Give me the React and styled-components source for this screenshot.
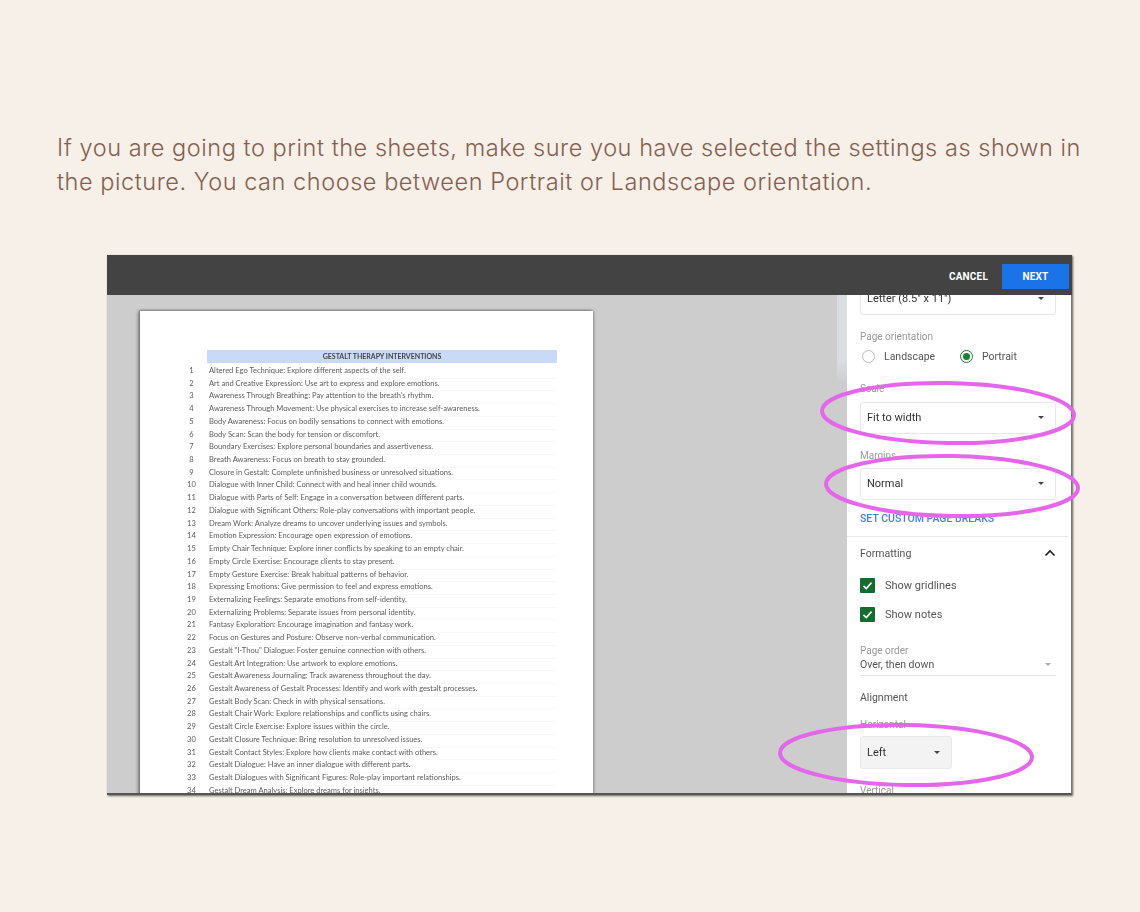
import React from 'react'
import styled, { createGlobalStyle } from 'styled-components'

const Global = createGlobalStyle`
html, body { margin: 0; padding: 0; background: #f6f0e9; }
* { box-sizing: border-box; }
`

const Screen = styled.div`
width: 1140px;
height: 912px;
padding: 131px 40px 0 57px;
overflow: hidden;
`
const Intro = styled.p`
margin: 0;
font-family: "Inter", "Open Sans", sans-serif;
font-size: 23.5px;
font-weight: 300;
line-height: 34px;
letter-spacing: 0.55px;
color: #85604f;
height: 124px;
white-space: nowrap;
`
const Window = styled.div`
position: relative;
width: 965px;
height: 540px;
margin: 0 0 0 50px;
display: flex;
flex-direction: column;
box-shadow: 1px 1px 2px rgba(0,0,0,.6);
`
const TopBar = styled.div`
height: 40px;
flex: none;
background: #434343;
display: flex;
align-items: center;
justify-content: flex-end;
padding: 2px 3px 0 0;
font-family: "Roboto", sans-serif;
font-size: 10px;
font-weight: 700;
color: #fff;
`
const Cancel = styled.span`
margin-right: 14px;
letter-spacing: .2px;
`
const NextButton = styled.span`
width: 67px;
height: 25px;
background: #1a73e8;
display: flex;
align-items: center;
justify-content: center;
letter-spacing: .2px;
`
const Body = styled.div`
flex: 1;
min-height: 0;
display: flex;
overflow: hidden;
border-bottom: 2px solid #555;
border-right: 1px solid #777;
background: #cdcdcd;
filter: blur(.45px);
`
const Preview = styled.div`
flex: 1;
padding: 16px 0 0 33px;
min-width: 0;
`
const Scrollbar = styled.div`
width: 10px;
height: 88px;
background: linear-gradient(#dadde1 75%, #cdcdcd);
`
const Sheet = styled.div`
width: 453px;
height: 600px;
background: #fff;
box-shadow: -2px 0 3px rgba(0,0,0,.4), 1px 0 3px rgba(0,0,0,.25), 0 -1px 2px rgba(0,0,0,.12);
padding: 39px 36px 0 35px;
font-family: "Lato", "Open Sans", sans-serif;
font-size: 7.55px;
color: #5c5c5c;
`
const SheetTitle = styled.div`
margin: 0 0 2px 32px;
height: 13px;
background: #c9daf8;
font-size: 7px;
font-weight: 700;
color: #444;
text-align: center;
line-height: 13px;
`
const SheetRow = styled.div`
display: grid;
grid-template-columns: 32px 1fr;
height: 12.73px;
line-height: 12.73px;
white-space: nowrap;
`
const RowNumber = styled.span`
text-align: center;
padding-left: 1px;
`
const RowText = styled.span`
padding-left: 2px;
border-bottom: 1px solid #f8f8f8;
`
const Panel = styled.div`
width: 224px;
flex: none;
background: #fff;
padding: 0 15px 0 13px;
font-family: "Roboto", sans-serif;
color: #555;
`
const PanelInner = styled.div`
margin-top: -12px;
`
const FieldLabel = styled.div`
font-size: 10px;
line-height: 12px;
color: #999;
margin-top: ${p => p.$top || 0}px;
`
const Select = styled.div`
height: ${p => p.$h || 32}px;
width: ${p => p.$w || 196}px;
margin-top: ${p => p.$top || 0}px;
padding: 0 11px 1px 6px;
border: 1px solid #e8e8e8;
border-radius: 3px;
background: ${p => p.$bg || '#fff'};
display: flex;
align-items: center;
justify-content: space-between;
font-size: 11px;
color: #333;
`
const Caret = styled.i`
width: 0;
height: 0;
border-left: 3.5px solid transparent;
border-right: 3.5px solid transparent;
border-top: 3.5px solid ${p => p.$color || '#444'};
`
const RadioRow = styled.div`
display: flex;
align-items: center;
height: 14px;
margin-top: 6px;
font-size: 10.5px;
`
const Radio = styled.span`
width: 13px;
height: 13px;
margin-left: 2px;
border-radius: 50%;
border: 1px solid ${p => p.$on ? '#188038' : '#bbb'};
display: flex;
align-items: center;
justify-content: center;
&::after {
  content: '';
  width: 7px;
  height: 7px;
  border-radius: 50%;
  background: ${p => p.$on ? '#188038' : 'transparent'};
}
`
const RadioText = styled.span`
margin-left: 9px;
width: ${p => p.$w || 'auto'};
`
const LinkText = styled.div`
margin-top: 12px;
height: 13px;
font-size: 10.5px;
line-height: 13px;
font-weight: 500;
color: #4a7fe0;
white-space: nowrap;
`
const Divider = styled.div`
height: 1px;
background: #e6e6e6;
margin: 11px -12px 0 -13px;
`
const SectionHead = styled.div`
display: flex;
align-items: center;
justify-content: space-between;
margin-top: ${p => p.$top || 0}px;
height: 14px;
font-size: 10.5px;
color: #555;
`
const CheckRow = styled.div`
display: flex;
align-items: center;
gap: 10px;
height: 15px;
margin-top: ${p => p.$top}px;
font-size: 11px;
`
const CheckBox = styled.span`
width: 15px;
height: 15px;
background: #146c2e;
border-radius: 1px;
display: flex;
align-items: center;
justify-content: center;
`
const OrderValue = styled.div`
display: flex;
align-items: center;
justify-content: space-between;
width: 196px;
height: 18px;
margin-top: 1px;
padding: 0 5px 4px 0;
border-bottom: 1px solid #e4e4e4;
font-size: 10.5px;
`
const Marks = styled.svg`
position: absolute;
left: 0;
top: 0;
width: 1000px;
height: 560px;
overflow: visible;
pointer-events: none;
`

const rows = [
  'Altered Ego Technique: Explore different aspects of the self.',
  'Art and Creative Expression: Use art to express and explore emotions.',
  "Awareness Through Breathing: Pay attention to the breath's rhythm.",
  'Awareness Through Movement: Use physical exercises to increase self-awareness.',
  'Body Awareness: Focus on bodily sensations to connect with emotions.',
  'Body Scan: Scan the body for tension or discomfort.',
  'Boundary Exercises: Explore personal boundaries and assertiveness.',
  'Breath Awareness: Focus on breath to stay grounded.',
  'Closure in Gestalt: Complete unfinished business or unresolved situations.',
  'Dialogue with Inner Child: Connect with and heal inner child wounds.',
  'Dialogue with Parts of Self: Engage in a conversation between different parts.',
  'Dialogue with Significant Others: Role-play conversations with important people.',
  'Dream Work: Analyze dreams to uncover underlying issues and symbols.',
  'Emotion Expression: Encourage open expression of emotions.',
  'Empty Chair Technique: Explore inner conflicts by speaking to an empty chair.',
  'Empty Circle Exercise: Encourage clients to stay present.',
  'Empty Gesture Exercise: Break habitual patterns of behavior.',
  'Expressing Emotions: Give permission to feel and express emotions.',
  'Externalizing Feelings: Separate emotions from self-identity.',
  'Externalizing Problems: Separate issues from personal identity.',
  'Fantasy Exploration: Encourage imagination and fantasy work.',
  'Focus on Gestures and Posture: Observe non-verbal communication.',
  'Gestalt "I-Thou" Dialogue: Foster genuine connection with others.',
  'Gestalt Art Integration: Use artwork to explore emotions.',
  'Gestalt Awareness Journaling: Track awareness throughout the day.',
  'Gestalt Awareness of Gestalt Processes: Identify and work with gestalt processes.',
  'Gestalt Body Scan: Check in with physical sensations.',
  'Gestalt Chair Work: Explore relationships and conflicts using chairs.',
  'Gestalt Circle Exercise: Explore issues within the circle.',
  'Gestalt Closure Technique: Bring resolution to unresolved issues.',
  'Gestalt Contact Styles: Explore how clients make contact with others.',
  'Gestalt Dialogue: Have an inner dialogue with different parts.',
  'Gestalt Dialogues with Significant Figures: Role-play important relationships.',
  'Gestalt Dream Analysis: Explore dreams for insights.',
]

const Tick = () => (
  <svg width="11" height="11" viewBox="0 0 11 11">
    <path d="M1.5 5.8 L4.3 8.5 L9.5 2.6" fill="none" stroke="#fff" strokeWidth="1.6" />
  </svg>
)

export default function App() {
  return (
    <Screen>
      <Global />
      <Intro>
        If you are going to print the sheets, make sure you have selected the settings as shown in<br />
        the picture. You can choose between Portrait or Landscape orientation.
      </Intro>
      <Window>
        <TopBar>
          <Cancel>CANCEL</Cancel>
          <NextButton>NEXT</NextButton>
        </TopBar>
        <Body>
          <Preview>
            <Sheet>
              <SheetTitle>GESTALT THERAPY INTERVENTIONS</SheetTitle>
              {rows.map((text, i) => (
                <SheetRow key={i}>
                  <RowNumber>{i + 1}</RowNumber>
                  <RowText>{text}</RowText>
                </SheetRow>
              ))}
            </Sheet>
          </Preview>
          <Scrollbar />
          <Panel>
            <PanelInner>
              <Select>Letter (8.5" x 11")<Caret /></Select>
              <FieldLabel $top={16}>Page orientation</FieldLabel>
              <RadioRow>
                <Radio />
                <RadioText $w="74px">Landscape</RadioText>
                <Radio $on />
                <RadioText>Portrait</RadioText>
              </RadioRow>
              <FieldLabel $top={20}>Scale</FieldLabel>
              <Select $top={7}>Fit to width<Caret /></Select>
              <FieldLabel $top={16}>Margins</FieldLabel>
              <Select $top={6}>Normal<Caret /></Select>
              <LinkText>SET CUSTOM PAGE BREAKS</LinkText>
              <Divider />
              <SectionHead $top={9}>
                Formatting
                <svg width="12" height="8" viewBox="0 0 12 8">
                  <path d="M1.5 6.5 L6 2 L10.5 6.5" fill="none" stroke="#222" strokeWidth="1.7" />
                </svg>
              </SectionHead>
              <CheckRow $top={18}><CheckBox><Tick /></CheckBox>Show gridlines</CheckRow>
              <CheckRow $top={14}><CheckBox><Tick /></CheckBox>Show notes</CheckRow>
              <FieldLabel $top={23}>Page order</FieldLabel>
              <OrderValue>Over, then down<Caret $color="#aaa" /></OrderValue>
              <SectionHead $top={14}>Alignment</SectionHead>
              <FieldLabel $top={15}>Horizontal</FieldLabel>
              <Select $w={92} $h={33} $top={5} $bg="#f3f3f3">Left<Caret /></Select>
              <FieldLabel $top={16}>Vertical</FieldLabel>
            </PanelInner>
          </Panel>
        </Body>
        <Marks viewBox="0 0 1000 560">
          <g fill="none" stroke="#e566ea" strokeWidth="4">
            <ellipse cx="841" cy="158" rx="126" ry="30" transform="rotate(1 841 158)" />
            <ellipse cx="845" cy="231" rx="126" ry="30" transform="rotate(1 845 231)" />
            <ellipse cx="799" cy="500" rx="126" ry="30" transform="rotate(1 799 500)" />
          </g>
        </Marks>
      </Window>
    </Screen>
  )
}
